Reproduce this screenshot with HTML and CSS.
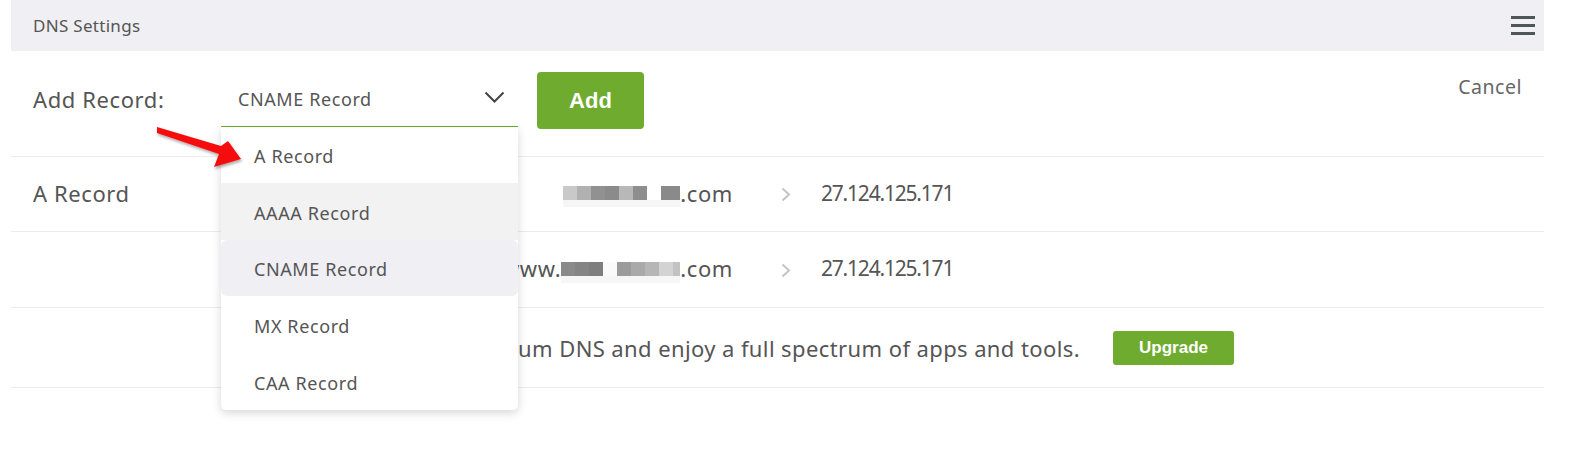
FILE: index.html
```html
<!DOCTYPE html>
<html lang="en">
<head>
    <meta charset="UTF-8">
    <meta name="viewport" content="width=device-width, initial-scale=1.0">
    <title>DNS Settings</title>
    <link rel="stylesheet" href="styles.css">
</head>
<body>

    <div class="panel">
        <div class="topbar">
            <span class="topbar-title">DNS Settings</span>
            <span class="menu-icon"><i></i><i></i><i></i></span>
        </div>

        <div class="add-row">
            <span class="add-label">Add Record:</span>
            <div class="select-wrap">
                <div class="select">
                    <span>CNAME Record</span>
                    <svg width="21" height="13" viewBox="0 0 21 13"><polyline points="1.5,1.5 10.5,10.5 19.5,1.5" fill="none" stroke="#444" stroke-width="2"/></svg>
                </div>
                <ul class="dropdown">
                    <li>A Record</li>
                    <li class="hover">AAAA Record</li>
                    <li class="selected">CNAME Record</li>
                    <li>MX Record</li>
                    <li>CAA Record</li>
                </ul>
            </div>
            <button class="btn-add">Add</button>
            <span class="cancel">Cancel</span>
        </div>

        <div class="record-row">
            <span class="rec-type">A Record</span>
            <span class="rec-host">
                <span class="blur">
                    <i style="background:#c9c9c9"></i><i style="background:#b1b1b1"></i><i style="background:#919191"></i><i style="background:#8b8b8b"></i><i style="background:#b8b8b8"></i><i style="background:#8e8e8e"></i><i style="background:transparent"></i><i style="background:#8a8a8a;width:19px"></i>
                </span><span>.com</span>
            </span>
            <span class="rec-arrow"><svg width="10" height="15" viewBox="0 0 10 15"><polyline points="1.5,1.5 8,7.5 1.5,13.5" fill="none" stroke="#c2c5c8" stroke-width="2"/></svg></span>
            <span class="rec-ip">27.124.125.171</span>
        </div>

        <div class="record-row second">
            <span class="rec-type"></span>
            <span class="rec-host"><span>www.</span><span class="blur">
                    <i style="background:#8a8a8a"></i><i style="background:#848484"></i><i style="background:#7e7e7e"></i><i style="background:#fafafa"></i><i style="background:#9b9b9b"></i><i style="background:#a9a9a9"></i><i style="background:#b6b6b6"></i><i style="background:#d3d3d3"></i><i style="background:#c2c2c2;width:7px"></i>
                </span><span>.com</span>
            </span>
            <span class="rec-arrow"><svg width="10" height="15" viewBox="0 0 10 15"><polyline points="1.5,1.5 8,7.5 1.5,13.5" fill="none" stroke="#c2c5c8" stroke-width="2"/></svg></span>
            <span class="rec-ip">27.124.125.171</span>
        </div>

        <div class="upgrade-row">
            <span class="upgrade-text">Upgrade to Premium DNS and enjoy a full spectrum of apps and tools.</span>
            <button class="btn-upgrade">Upgrade</button>
        </div>
    </div>

    <!-- annotation arrow drawn over the screenshot -->
    <svg class="pointer" width="100" height="50" viewBox="150 120 100 50">
        <defs>
            <filter id="shade" x="-20%" y="-20%" width="140%" height="160%">
                <feDropShadow dx="1" dy="2" stdDeviation="1.5" flood-color="#000" flood-opacity="0.35"/>
            </filter>
        </defs>
        <polygon points="157,127 221,146 228,141 241,159 214,167 219,154 157,133" fill="#f50d0d" filter="url(#shade)"/>
    </svg>

</body>
</html>
```

FILE: styles.css
```css
body {
    margin: 0;
    min-height: 100vh;
    font-family: 'Noto Sans', 'Open Sans', sans-serif;
    color: #4a4a4a;
    background: #fff;
    position: relative;
}

.panel {
    margin: 0 28px 0 11px;
}

.topbar {
    height: 51px;
    background-color: #efeff4;
    display: flex;
    align-items: center;
    justify-content: space-between;
    padding: 0 9px 0 22px;
}

.topbar-title {
    font-size: 17px;
    letter-spacing: 0.3px;
    color: #555;
}

.menu-icon {
    display: flex;
    flex-direction: column;
    gap: 5px;
    width: 24px;
    margin-top: -1px;
}

.menu-icon i {
    display: block;
    height: 3px;
    background: #4f5658;
}

.add-row {
    display: flex;
    align-items: flex-start;
    padding: 21px 22px 27px 22px;
    border-bottom: 1px solid #ececf0;
}

.add-label {
    width: 188px;
    font-size: 22px;
    letter-spacing: 0.6px;
    line-height: 55px;
    color: #555;
}

.select-wrap {
    position: relative;
    width: 297px;
}

.select {
    height: 54px;
    border-bottom: 1px solid #6fab2f;
    display: flex;
    align-items: center;
    justify-content: space-between;
    padding: 0 13px 0 17px;
    font-size: 18px;
    letter-spacing: 0.6px;
    color: #555;
}

.select svg {
    margin-top: -3px;
}

.dropdown {
    position: absolute;
    top: 55px;
    left: 0;
    right: 0;
    margin: 0;
    padding: 0;
    list-style: none;
    background: #fff;
    border-radius: 0 0 5px 5px;
    box-shadow: 0 3px 10px rgba(0, 0, 0, 0.16);
    z-index: 2;
}

.dropdown li {
    height: 57px;
    line-height: 60px;
    padding-left: 33px;
    font-size: 18px;
    letter-spacing: 0.6px;
    color: #555;
}

.dropdown li:first-child {
    height: 56px;
    line-height: 58px;
}

.dropdown li.hover {
    background-color: #f2f2f2;
}

.dropdown li.selected {
    background-color: #efeff4;
    border-radius: 6px;
    height: 56px;
    line-height: 58px;
}

.btn-add {
    margin-left: 19px;
    width: 107px;
    height: 57px;
    background-color: #6fab2f;
    border: none;
    border-radius: 4px;
    color: #fff;
    font-family: 'Liberation Sans', Arial, sans-serif;
    font-weight: bold;
    font-size: 22px;
}

.cancel {
    margin-left: auto;
    margin-top: 1px;
    font-size: 19.5px;
    letter-spacing: 0.5px;
    color: #666;
}

.record-row {
    display: grid;
    grid-template-columns: 487px 213px 88px 1fr;
    align-items: center;
    height: 71px;
    padding: 0 0 3px 22px;
    border-bottom: 1px solid #ececf0;
    font-size: 22px;
    letter-spacing: 0.6px;
    color: #555;
}

.record-row.second {
    height: 72px;
}

.rec-host {
    display: flex;
    justify-content: flex-end;
    align-items: center;
    white-space: nowrap;
}

.blur {
    display: flex;
    margin-top: 8px;
    letter-spacing: 0;
}

.blur i {
    display: block;
    width: 14px;
    height: 14px;
    border-bottom: 7px solid #f6f6f6;
}

.rec-arrow {
    padding-left: 48px;
    display: flex;
    align-items: center;
    margin-top: 4px;
}

.rec-ip {
    font-size: 21px;
    letter-spacing: -1.2px;
}

.upgrade-row {
    height: 79px;
    display: flex;
    align-items: center;
    justify-content: flex-end;
    padding-right: 310px;
    border-bottom: 1px solid #ececf0;
    white-space: nowrap;
    overflow: hidden;
}

.upgrade-text {
    font-size: 22px;
    letter-spacing: 0.4px;
    color: #555;
}

.btn-upgrade {
    margin-left: 33px;
    width: 121px;
    height: 34px;
    background-color: #6fab2f;
    border: none;
    border-radius: 3px;
    color: #fff;
    font-family: 'Liberation Sans Narrow', 'Liberation Sans', Arial, sans-serif;
    font-weight: bold;
    font-size: 17px;
}

.pointer {
    position: absolute;
    left: 150px;
    top: 120px;
    z-index: 3;
    overflow: visible;
}
```
